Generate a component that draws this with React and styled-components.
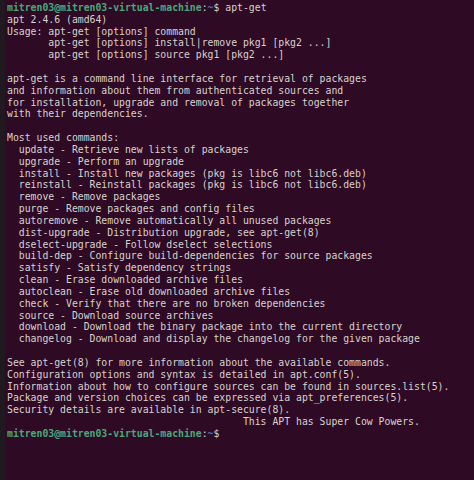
import React from 'react';
import styled, { createGlobalStyle } from 'styled-components';

const GlobalStyle = createGlobalStyle`
  html, body {
    margin: 0;
    padding: 0;
    background: #2f0a24;
  }
`;

const Window = styled.div`
  display: flex;
  width: 474px;
  height: 480px;
  overflow: hidden;
  background: #2f0a24;
`;

const Edge = styled.div`
  width: 5px;
  flex: none;
  background: #211920;
`;

const Screen = styled.pre`
  margin: 0;
  padding: 2px 0 0 2px;
  flex: 1;
  font-family: "DejaVu Sans Mono", "Liberation Mono", monospace;
  font-size: 9.8px;
  line-height: 11.83px;
  color: #d6d2cf;
  white-space: pre;
`;

const User = styled.span`
  color: #4aa77a;
  font-weight: bold;
`;

const Dir = styled.span`
  color: #4a6fb0;
  font-weight: bold;
`;

const Prompt = ({ cmd }) => (
  <>
    <User>mitren03@mitren03-virtual-machine</User>:<Dir>~</Dir>$ {cmd}
  </>
);

const usage = `apt 2.4.6 (amd64)
Usage: apt-get [options] command
       apt-get [options] install|remove pkg1 [pkg2 ...]
       apt-get [options] source pkg1 [pkg2 ...]

apt-get is a command line interface for retrieval of packages
and information about them from authenticated sources and
for installation, upgrade and removal of packages together
with their dependencies.

Most used commands:
  update - Retrieve new lists of packages
  upgrade - Perform an upgrade
  install - Install new packages (pkg is libc6 not libc6.deb)
  reinstall - Reinstall packages (pkg is libc6 not libc6.deb)
  remove - Remove packages
  purge - Remove packages and config files
  autoremove - Remove automatically all unused packages
  dist-upgrade - Distribution upgrade, see apt-get(8)
  dselect-upgrade - Follow dselect selections
  build-dep - Configure build-dependencies for source packages
  satisfy - Satisfy dependency strings
  clean - Erase downloaded archive files
  autoclean - Erase old downloaded archive files
  check - Verify that there are no broken dependencies
  source - Download source archives
  download - Download the binary package into the current directory
  changelog - Download and display the changelog for the given package

See apt-get(8) for more information about the available commands.
Configuration options and syntax is detailed in apt.conf(5).
Information about how to configure sources can be found in sources.list(5).
Package and version choices can be expressed via apt_preferences(5).
Security details are available in apt-secure(8).
                                        This APT has Super Cow Powers.
`;

export default function App() {
  return (
    <>
      <GlobalStyle />
      <Window>
        <Edge />
        <Screen>
          <Prompt cmd="apt-get" />
          {'\n'}
          {usage}
          <Prompt cmd="" />
        </Screen>
      </Window>
    </>
  );
}
